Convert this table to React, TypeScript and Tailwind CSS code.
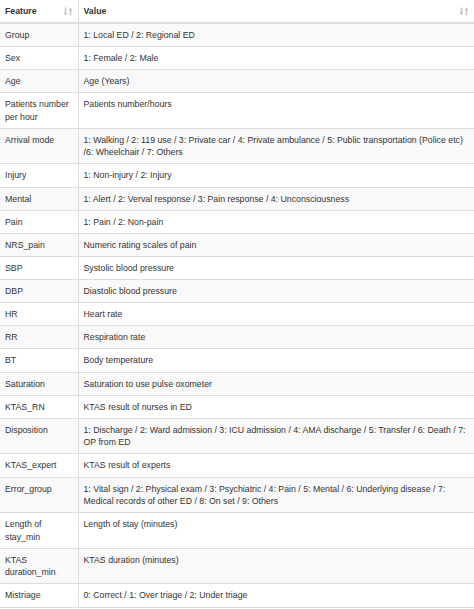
const rows: [string, string][] = [
  ['Group', '1: Local ED / 2: Regional ED'],
  ['Sex', '1: Female / 2: Male'],
  ['Age', 'Age (Years)'],
  ['Patients number per hour', 'Patients number/hours'],
  ['Arrival mode', '1: Walking / 2: 119 use / 3: Private car / 4: Private ambulance / 5: Public transportation (Police etc) /6: Wheelchair / 7: Others'],
  ['Injury', '1: Non-injury / 2: Injury'],
  ['Mental', '1: Alert / 2: Verval response / 3: Pain response / 4: Unconsciousness'],
  ['Pain', '1: Pain / 2: Non-pain'],
  ['NRS_pain', 'Numeric rating scales of pain'],
  ['SBP', 'Systolic blood pressure'],
  ['DBP', 'Diastolic blood pressure'],
  ['HR', 'Heart rate'],
  ['RR', 'Respiration rate'],
  ['BT', 'Body temperature'],
  ['Saturation', 'Saturation to use pulse oxometer'],
  ['KTAS_RN', 'KTAS result of nurses in ED'],
  ['Disposition', '1: Discharge / 2: Ward admission / 3: ICU admission / 4: AMA discharge / 5: Transfer / 6: Death / 7: OP from ED'],
  ['KTAS_expert', 'KTAS result of experts'],
  ['Error_group', '1: Vital sign / 2: Physical exam / 3: Psychiatric / 4: Pain / 5: Mental / 6: Underlying disease / 7: Medical records of other ED / 8: On set / 9: Others'],
  ['Length of stay_min', 'Length of stay (minutes)'],
  ['KTAS duration_min', 'KTAS duration (minutes)'],
  ['Mistriage', '0: Correct / 1: Over triage / 2: Under triage'],
];

function SortIcon() {
  return (
    <svg className="absolute right-[5px] top-[7px] h-[9px] w-[10px]" viewBox="0 0 10 9" fill="none">
      {/* down arrow */}
      <path d="M2.5 0.5V7.5" stroke="#c4c4c4" strokeWidth="1.6" />
      <path d="M0.6 5.6L2.5 8.3L4.4 5.6Z" fill="#c4c4c4" />
      {/* up arrow */}
      <path d="M7.5 1.5V8.5" stroke="#c4c4c4" strokeWidth="1.6" />
      <path d="M5.6 3.4L7.5 0.7L9.4 3.4Z" fill="#c4c4c4" />
    </svg>
  );
}

export default function App() {
  return (
    <div className="w-[474px] bg-white font-['Liberation_Sans',Arial,sans-serif] text-[8.75px] leading-[12.5px] text-[#333]">
      <table className="w-full table-fixed border-separate border-spacing-0">
        <colgroup>
          <col className="w-[77.5px]" />
          <col />
        </colgroup>
        <thead>
          <tr>
            <th className="relative border-b-2 border-[#dddddd] pl-[5px] pr-[18px] pt-[5px] pb-[4.25px] text-left align-bottom font-bold">
              Feature
              <SortIcon />
            </th>
            <th className="relative border-b-2 border-l border-[#dddddd] pl-[5px] pr-[18px] pt-[5px] pb-[4.25px] text-left align-bottom font-bold">
              Value
              <SortIcon />
            </th>
          </tr>
        </thead>
        <tbody>
          {rows.map(([feature, value], i) => (
            <tr key={feature} className={i % 2 === 0 ? 'bg-[#f9f9f9]' : 'bg-white'}>
              <td className="border-b border-[#dddddd] px-[5px] pt-[5px] pb-[4.625px] align-top">{feature}</td>
              <td className="border-b border-l border-[#dddddd] px-[5px] pt-[5px] pb-[4.625px] align-top">{value}</td>
            </tr>
          ))}
        </tbody>
      </table>
    </div>
  );
}
